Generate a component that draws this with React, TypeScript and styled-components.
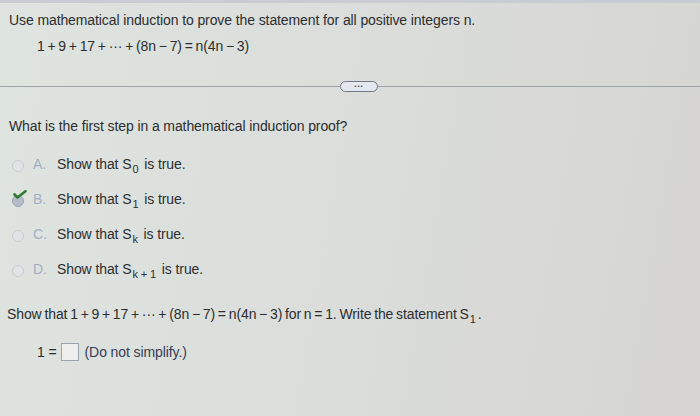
import React from 'react'
import styled, { createGlobalStyle } from 'styled-components';

const GlobalStyle = createGlobalStyle`
  html, body {
    margin: 0;
    padding: 0;
  }
  body {
    width: 700px;
    height: 416px;
    overflow: hidden;
    font-family: "Liberation Sans", Arial, sans-serif;
    color: #2c2e31;
  }
`;

const options = [
  { letter: 'A', sub: '0', checked: false },
  { letter: 'B', sub: '1', checked: true },
  { letter: 'C', sub: 'k', checked: false },
  { letter: 'D', sub: 'k + 1', checked: false },
];

const App: React.FC = () => {
  return (
    <PAGE>
      <GlobalStyle />
      <TopStrip />
      <Heading>Use mathematical induction to prove the statement for all positive integers n.</Heading>
      <Formula>1 + 9 + 17 + ··· + (8n − 7) = n(4n − 3)</Formula>

      <Divider>
        <Line $width="340px" />
        <Pill>•••</Pill>
        <Line />
      </Divider>

      <Question>What is the first step in a mathematical induction proof?</Question>

      <Options>
        {options.map((o) => (
          <Option key={o.letter}>
            <RadioWrap>
              <Radio $selected={o.checked} />
              {o.checked && (
                <Check viewBox="0 0 14 9">
                  <path d="M1.5 4.5 L4.5 7.5 L12.5 1.2" fill="none" stroke="#2f7d35" strokeWidth="2.6" strokeLinecap="round" strokeLinejoin="round" />
                </Check>
              )}
            </RadioWrap>
            <Letter>{o.letter}.</Letter>
            <OptionText>
              Show that S<Sub>{o.sub}</Sub> is true.
            </OptionText>
          </Option>
        ))}
      </Options>

      <Prompt>
        Show that 1 + 9 + 17 + ··· + (8n − 7) = n(4n − 3) for n = 1. Write the statement S<Sub>1</Sub>.
      </Prompt>

      <Answer>
        <span>1 =</span>
        <AnswerBox />
        <Hint>(Do not simplify.)</Hint>
      </Answer>
    </PAGE>
  )
}

const PAGE = styled.div`
  width: 700px;
  height: 416px;
  box-sizing: border-box;
  background: linear-gradient(100deg, #dee4df 0%, #dbdedb 45%, #d6d5d2 100%);
  display: flex;
  flex-direction: column;
  font-size: 14px;
  letter-spacing: -0.1px;
`;

const TopStrip = styled.div`
  height: 3px;
  background: #c9ccd2;
`;

const Heading = styled.div`
  margin: 7px 0 0 9px;
  line-height: 20px;
`;

const Formula = styled.div`
  margin: 6px 0 0 37px;
  line-height: 20px;
  word-spacing: -1px;
`;

const Divider = styled.div`
  display: flex;
  align-items: center;
  margin-top: 24px;
  height: 12px;
`;

const Line = styled.div<{ $width?: string }>`
  flex: ${(p) => (p.$width ? `0 0 ${p.$width}` : '1')};
  height: 1px;
  background: #9ea3a8;
`;

const Pill = styled.div`
  width: 36px;
  height: 9px;
  border: 1px solid #6f7886;
  border-radius: 6px;
  background: #e4e8ee;
  font-size: 6px;
  line-height: 9px;
  text-align: center;
  color: #3c4a6a;
  letter-spacing: 1px;
`;

const Question = styled.div`
  margin: 24px 0 0 9px;
  line-height: 20px;
`;

const Options = styled.div`
  display: flex;
  flex-direction: column;
  gap: 15px;
  margin-top: 18px;
`;

const Option = styled.div`
  display: flex;
  align-items: center;
  height: 20px;
`;

const RadioWrap = styled.div`
  position: relative;
  width: 12px;
  height: 12px;
  margin-left: 12px;
`;

const Radio = styled.div<{ $selected?: boolean }>`
  width: 10px;
  height: 10px;
  margin-top: 2px;
  border: 1px solid ${(p) => (p.$selected ? '#9ea6b6' : '#c6cbcf')};
  border-radius: 50%;
  background: ${(p) => (p.$selected ? '#b4bbc9' : '#e0e4e4')};
`;

const Check = styled.svg`
  position: absolute;
  left: 1px;
  top: -3px;
  width: 14px;
  height: 9px;
`;

const Letter = styled.span`
  width: 24px;
  margin-left: 9px;
  color: #a3aec4;
`;

const OptionText = styled.span``;

const Sub = styled.sub`
  font-size: 11px;
  vertical-align: -4px;
  line-height: 0;
  margin: 0 2px 0 1px;
`;

const Prompt = styled.div`
  margin: 25px 0 0 7px;
  line-height: 20px;
  word-spacing: -1px;
`;

const Answer = styled.div`
  display: flex;
  align-items: center;
  margin: 18px 0 0 37px;
  height: 20px;
`;

const AnswerBox = styled.div`
  width: 16px;
  height: 16px;
  border: 1px solid #9aa4ad;
  background: #eef0ee;
  margin: 0 6px 0 4px;
`;

const Hint = styled.span`
  color: #363b58;
`;

export default App
